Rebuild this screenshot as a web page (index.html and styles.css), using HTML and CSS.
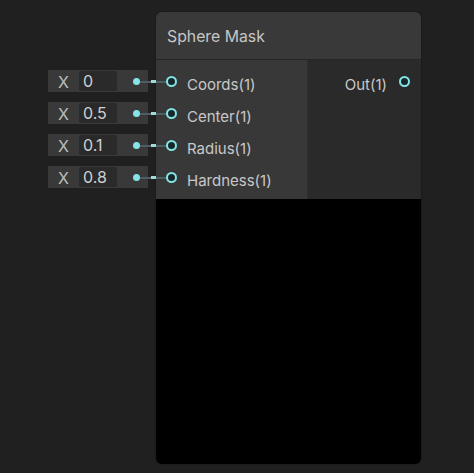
FILE: index.html
```html
<!DOCTYPE html>
<html>
<head>
<meta charset="utf-8">
<link rel="stylesheet" href="styles.css">
</head>
<body>
<div class="canvas">
  <div class="fields">
    <div class="field"><span class="axis">X</span><span class="value">0</span><span class="dot"></span><span class="edge"><span class="dash"></span></span></div>
    <div class="field"><span class="axis">X</span><span class="value">0.5</span><span class="dot"></span><span class="edge"><span class="dash"></span></span></div>
    <div class="field"><span class="axis">X</span><span class="value">0.1</span><span class="dot"></span><span class="edge"><span class="dash"></span></span></div>
    <div class="field"><span class="axis">X</span><span class="value">0.8</span><span class="dot"></span><span class="edge"><span class="dash"></span></span></div>
  </div>
  <div class="node">
    <div class="title">Sphere Mask</div>
    <div class="body">
      <div class="inputs">
        <div class="port-row"><span class="port"></span><span class="label">Coords(1)</span></div>
        <div class="port-row"><span class="port"></span><span class="label">Center(1)</span></div>
        <div class="port-row"><span class="port"></span><span class="label">Radius(1)</span></div>
        <div class="port-row"><span class="port"></span><span class="label">Hardness(1)</span></div>
      </div>
      <div class="outputs">
        <div class="port-row out"><span class="label">Out(1)</span><span class="port"></span></div>
      </div>
    </div>
    <div class="preview"></div>
  </div>
</div>
</body>
</html>
```
FILE: styles.css
```css
html, body {
  margin: 0;
  padding: 0;
  background: #202020;
  height: 100%;
}
body {
  font-family: Inter, "Noto Sans", sans-serif;
  color: #c4c4c4;
}
.canvas {
  display: flex;
  align-items: flex-start;
  padding: 12px 0 0 48px;
}
.fields {
  display: flex;
  flex-direction: column;
  gap: 10px;
  padding-top: 58px;
  width: 100px;
  margin-right: 8px;
}
.field {
  position: relative;
  height: 22px;
  background: #393939;
  display: flex;
  align-items: center;
  font-size: 16px;
}
.axis {
  width: 31px;
  text-align: center;
  color: #bdbdbd;
  padding-top: 2px;
}
.value {
  width: 34px;
  height: 20px;
  line-height: 21px;
  padding-left: 4px;
  background: #2a2a2a;
  border-radius: 3px;
  color: #d0d0d0;
}
.dot {
  position: absolute;
  left: 85px;
  top: 8px;
  width: 7px;
  height: 7px;
  border-radius: 50%;
  background: #86e3e6;
}
.edge {
  position: absolute;
  left: 92px;
  top: 10.5px;
  width: 28px;
  height: 2px;
  background: #4b5f60;
  z-index: 2;
}
.dash {
  position: absolute;
  left: 11px;
  top: -0.5px;
  width: 5px;
  height: 3px;
  background: #9fd9da;
}
.node {
  width: 265px;
  display: flex;
  flex-direction: column;
  border-radius: 6px;
  overflow: hidden;
  box-shadow: 0 0 2px rgba(0,0,0,0.5);
}
.title {
  height: 48px;
  box-sizing: border-box;
  border-bottom: 1px solid #262626;
  background: #393939;
  padding-left: 11px;
  line-height: 49px;
  font-size: 15.8px;
  color: #c6c6c6;
}
.body {
  display: flex;
  height: 139px;
}
.inputs {
  width: 152px;
  background: #383838;
  display: flex;
  flex-direction: column;
  gap: 10px;
  padding-top: 10px;
  box-sizing: border-box;
  border-right: 1px solid #2f2f2f;
}
.outputs {
  flex: 1;
  background: #2a2a2a;
  display: flex;
  flex-direction: column;
  padding-top: 10px;
}
.port-row {
  height: 22px;
  display: flex;
  align-items: center;
  font-size: 15px;
  color: #c8c8c8;
}
.inputs .port {
  margin-left: 10px;
  margin-right: 10px;
}
.port {
  position: relative;
  z-index: 3;
  width: 7px;
  height: 7px;
  border: 2px solid #86e3e6;
  border-radius: 50%;
  background: #17282a;
  flex: none;
}
.label {
  padding-top: 6px;
}
.out {
  justify-content: flex-end;
}
.out .port {
  margin-left: 12px;
  margin-right: 11px;
}
.preview {
  height: 265px;
  background: #000;
}
```
